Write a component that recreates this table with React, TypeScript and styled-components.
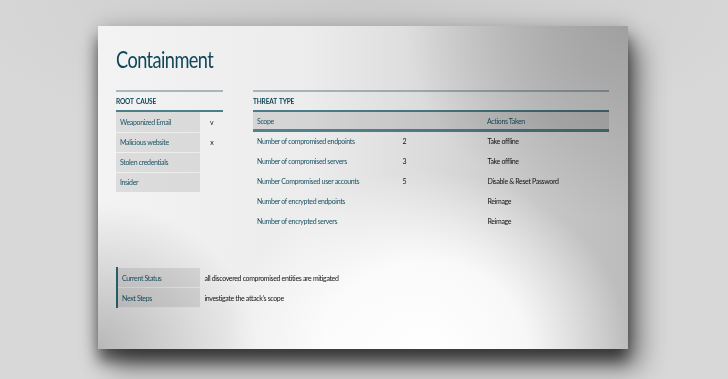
import React from 'react';
import styled, { createGlobalStyle } from 'styled-components';

const GlobalStyle = createGlobalStyle`
  html, body {
    margin: 0;
    padding: 0;
    background: #d6d6d6;
  }
  body {
    font-family: Lato, "Open Sans", sans-serif;
  }
`;

const Page = styled.div`
  width: 728px;
  height: 379px;
  box-sizing: border-box;
  padding: 26px 0 0 98px;
  overflow: hidden;
  background:
    radial-gradient(ellipse 60% 40% at 50% 0%, #cbcbcb 0%, rgba(203,203,203,0) 100%),
    #d8d8d8;
`;

const Slide = styled.div`
  position: relative;
  width: 530px;
  height: 323px;
  box-sizing: border-box;
  padding: 19px 19px 0 18px;
  background: #fff;
  display: flex;
  flex-direction: column;
  box-shadow:
    0 12px 14px rgba(0, 0, 0, 0.55),
    12px 18px 26px rgba(0, 0, 0, 0.45),
    0 -4px 18px rgba(0, 0, 0, 0.1);
`;

const Lighting = styled.div`
  position: absolute;
  inset: 0;
  pointer-events: none;
  mix-blend-mode: multiply;
  background:
    radial-gradient(ellipse 38% 55% at 62% 100%, rgba(255,255,255,1) 0%, rgba(255,255,255,0.85) 50%, rgba(255,255,255,0) 100%),
    radial-gradient(ellipse 30% 45% at 0% 100%, rgba(184,184,184,1) 0%, rgba(184,184,184,0) 100%),
    radial-gradient(ellipse 42% 60% at 100% 0%, rgba(160,160,160,1) 0%, rgba(160,160,160,0) 100%),
    linear-gradient(to right, #f3f3f3 0%, #ececec 40%, #dbdbdb 62%, #c6c6c6 85%, #bcbcbc 100%);
`;

const Title = styled.h1`
  margin: 0;
  font-family: Lato, sans-serif;
  font-weight: 400;
  font-size: 23px;
  line-height: 28px;
  letter-spacing: -0.7px;
  color: #0f4b5e;
  transform: scaleX(0.79);
  transform-origin: left center;
`;

const TablesRow = styled.div`
  display: flex;
  gap: 30px;
  margin-top: 17px;
`;

const Block = styled.div<{ $width: number }>`
  width: ${({ $width }) => $width}px;
`;

const BlockHead = styled.div`
  height: 18px;
  border-top: 2px solid #b3c2c8;
  border-bottom: 2px solid #4f8792;
  display: flex;
  align-items: center;
  font-size: 6.5px;
  font-weight: 700;
  letter-spacing: -0.15px;
  word-spacing: 1px;
  color: #0d4a5d;
  text-transform: uppercase;
`;

const Table = styled.table`
  width: 100%;
  border-collapse: collapse;
  table-layout: fixed;
`;

const Cell = styled.td<{ $shade?: boolean; $label?: boolean; $center?: boolean }>`
  height: 20px;
  padding: 0 4px;
  box-sizing: border-box;
  font-size: 7px;
  letter-spacing: -0.35px;
  white-space: nowrap;
  text-align: ${({ $center }) => ($center ? 'center' : 'left')};
  color: ${({ $label }) => ($label ? '#1a586b' : '#161616')};
  background: ${({ $shade }) => ($shade ? 'rgba(0,0,0,0.09)' : 'transparent')};
  border-bottom: 1px solid rgba(255, 255, 255, 0.85);
  & + & {
    border-left: 1px solid rgba(255, 255, 255, 0.7);
  }
`;

const HeadCell = styled.th`
  height: 17px;
  padding: 0 4px;
  text-align: left;
  font-weight: 400;
  font-size: 7px;
  letter-spacing: -0.35px;
  color: #1a586b;
  background: rgba(0, 0, 0, 0.1);
  border-bottom: 3px solid #5a8c97;
`;

const StatusTable = styled(Table)`
  margin-top: 36px;
  width: 493px;
  border-left: 2px solid #2d6f7e;
  border-top: 1px solid rgba(255, 255, 255, 0.85);
`;

const rootCauses = [
  ['Weaponized Email', 'v'],
  ['Malicious website', 'x'],
  ['Stolen credentials', ''],
  ['Insider', ''],
];

const threats = [
  ['Number of compromised endpoints', '2', 'Take offline'],
  ['Number of compromised  servers', '3', 'Take offline'],
  ['Number Compromised user accounts', '5', 'Disable & Reset Password'],
  ['Number of encrypted  endpoints', '', 'Reimage'],
  ['Number of encrypted servers', '', 'Reimage'],
];

const status = [
  ['Current Status', 'all discovered compromised entities are mitigated'],
  ['Next Steps', 'investigate the attack\u2019s scope'],
];

export default function App() {
  return (
    <>
      <GlobalStyle />
      <Page>
        <Slide>
          <Title>Containment</Title>
          <TablesRow>
            <Block $width={107}>
              <BlockHead>Root Cause</BlockHead>
              <Table>
                <colgroup>
                  <col style={{ width: 84 }} />
                  <col />
                </colgroup>
                <tbody>
                  {rootCauses.map(([name, mark]) => (
                    <tr key={name}>
                      <Cell $shade $label>{name}</Cell>
                      <Cell $center>{mark}</Cell>
                    </tr>
                  ))}
                </tbody>
              </Table>
            </Block>
            <Block $width={356}>
              <BlockHead>Threat Type</BlockHead>
              <Table>
                <colgroup>
                  <col style={{ width: 145 }} />
                  <col style={{ width: 85 }} />
                  <col />
                </colgroup>
                <thead>
                  <tr>
                    <HeadCell>Scope</HeadCell>
                    <HeadCell />
                    <HeadCell>Actions Taken</HeadCell>
                  </tr>
                </thead>
                <tbody>
                  {threats.map(([scope, count, action]) => (
                    <tr key={scope}>
                      <Cell $label>{scope}</Cell>
                      <Cell>{count}</Cell>
                      <Cell>{action}</Cell>
                    </tr>
                  ))}
                </tbody>
              </Table>
            </Block>
          </TablesRow>
          <StatusTable>
            <colgroup>
              <col style={{ width: 83 }} />
              <col />
            </colgroup>
            <tbody>
              {status.map(([label, text]) => (
                <tr key={label}>
                  <Cell $shade $label>{label}</Cell>
                  <Cell>{text}</Cell>
                </tr>
              ))}
            </tbody>
          </StatusTable>
          <Lighting />
        </Slide>
      </Page>
    </>
  );
}
